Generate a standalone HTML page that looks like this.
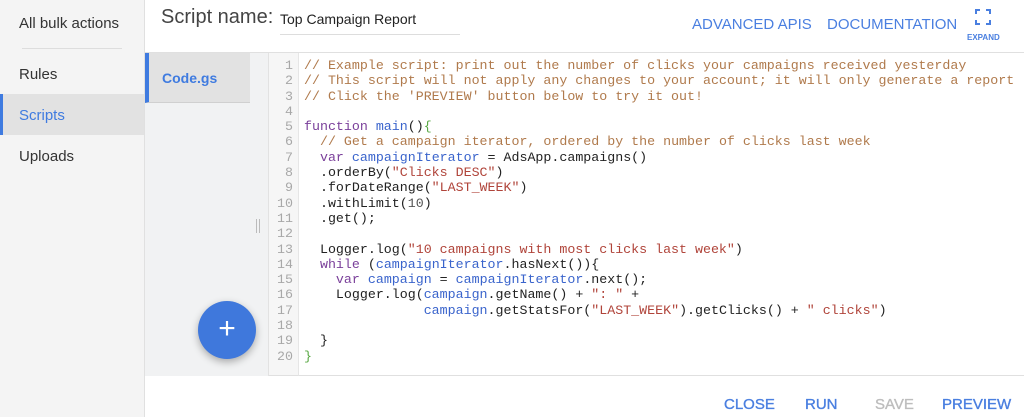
<!DOCTYPE html>
<html><head><meta charset="utf-8"><style>
*{margin:0;padding:0;box-sizing:border-box}
body{width:1024px;height:417px;overflow:hidden;background:#fff;font-family:"Liberation Sans",Arial,sans-serif;position:relative}
.side{position:absolute;left:0;top:0;width:145px;height:417px;background:#f4f4f4;border-right:1px solid #e0e0e0}
.side div{position:absolute;left:19px;font-size:15px;color:#333}
.hdr{position:absolute;left:145px;top:0;right:0;height:53px;border-bottom:1px solid #e0e0e0;background:#fff}
.files{position:absolute;left:145px;top:53px;width:124px;height:323px;background:#f1f2f3;border-right:1px solid #e2e2e2}
.tab{position:absolute;left:0;top:0;width:105px;height:50px;background:#e2e2e2;border-left:4px solid #3f7be0;border-bottom:1px solid #d0d0d0}
.gut{position:absolute;left:269px;top:53px;width:30px;height:323px;background:#f6f6f6;border-right:1px solid #e6e6e6;border-bottom:1px solid #e0e0e0}
.code{position:absolute;left:299px;top:53px;right:0;height:323px;border-bottom:1px solid #e0e0e0}
pre{font-family:"Liberation Mono",monospace;font-size:13.3px;line-height:15.3px}
.gut pre{position:absolute;right:5px;top:5px;text-align:right;color:#a8a8a8}
.code pre{position:absolute;left:5px;top:5px;color:#222}
.c{color:#b07a4c}.k{color:#7a3f9a}.v{color:#3a64cc}.s{color:#b0443a}.g{color:#58a843}.n{color:#555}
.btn{position:absolute;color:#4a7fe0;font-size:15px;-webkit-text-stroke:0.35px currentColor;font-family:"Liberation Sans",Arial,sans-serif}
</style></head><body>
<div class="side">
<div style="top:15px">All bulk actions</div>
<div style="top:48px;left:22px;width:100px;height:1px;background:#ddd"></div>
<div style="top:66px">Rules</div>
<div style="top:94px;left:0;width:144px;height:41px;background:#e2e2e2;border-left:3px solid #3f7be0"></div>
<div style="top:107px;color:#3f7be0">Scripts</div>
<div style="top:148px">Uploads</div>
</div>
<div class="hdr">
<div style="position:absolute;left:16px;top:6px;font-size:20px;color:#444">Script name:</div>
<div style="position:absolute;left:135px;top:11px;font-size:14px;color:#222">Top Campaign Report</div>
<div style="position:absolute;left:135px;top:34px;width:180px;height:1px;background:#ddd"></div>
<div class="btn" style="left:547px;top:16px;-webkit-text-stroke:0">ADVANCED APIS</div>
<div class="btn" style="left:682px;top:16px;-webkit-text-stroke:0">DOCUMENTATION</div>
<svg style="position:absolute;left:830px;top:9px" width="16" height="16" viewBox="0 0 16 16" fill="none" stroke="#4a7fe0" stroke-width="2"><path d="M1 5V1h4M11 1h4v4M15 11v4h-4M5 15H1v-4"/></svg>
<div class="btn" style="left:822px;top:33px;font-size:8px;font-weight:bold;-webkit-text-stroke:0">EXPAND</div>
</div>
<div class="files"><div class="tab"><div style="position:absolute;left:13px;top:17px;font-size:14px;font-weight:bold;color:#3f7be0">Code.gs</div></div>
<div style="position:absolute;left:111px;top:166px;height:14px;border-left:1px solid #bbb;border-right:1px solid #bbb;width:4px"></div>
<div style="position:absolute;left:53px;top:248px;width:58px;height:58px;border-radius:50%;background:#3f78dc;box-shadow:0 3px 8px rgba(0,0,0,.3);color:#fff;font-size:30px;text-align:center;line-height:56px">+</div>
</div>
<div class="gut"><pre>1
2
3
4
5
6
7
8
9
10
11
12
13
14
15
16
17
18
19
20</pre></div>
<div class="code"><pre><span class="c">// Example script: print out the number of clicks your campaigns received yesterday
// This script will not apply any changes to your account; it will only generate a report
// Click the 'PREVIEW' button below to try it out!</span>

<span class="k">function</span> <span class="v">main</span>()<span class="g">{</span>
  <span class="c">// Get a campaign iterator, ordered by the number of clicks last week</span>
  <span class="k">var</span> <span class="v">campaignIterator</span> = AdsApp.campaigns()
  .orderBy(<span class="s">"Clicks DESC"</span>)
  .forDateRange(<span class="s">"LAST_WEEK"</span>)
  .withLimit(<span class="n">10</span>)
  .get();

  Logger.log(<span class="s">"10 campaigns with most clicks last week"</span>)
  <span class="k">while</span> (<span class="v">campaignIterator</span>.hasNext()){
    <span class="k">var</span> <span class="v">campaign</span> = <span class="v">campaignIterator</span>.next();
    Logger.log(<span class="v">campaign</span>.getName() + <span class="s">": "</span> +
               <span class="v">campaign</span>.getStatsFor(<span class="s">"LAST_WEEK"</span>).getClicks() + <span class="s">" clicks"</span>)

  }
<span class="g">}</span></pre></div>
<div class="btn" style="left:724px;top:396px">CLOSE</div>
<div class="btn" style="left:805px;top:396px">RUN</div>
<div class="btn" style="left:875px;top:396px;color:#bdbdbd">SAVE</div>
<div class="btn" style="left:942px;top:396px">PREVIEW</div>
</body></html>
